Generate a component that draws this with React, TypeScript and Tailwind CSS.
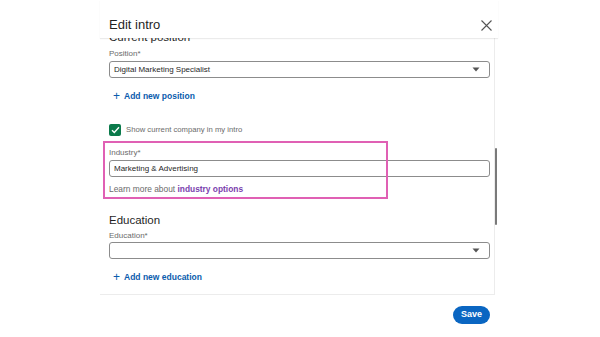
import React from 'react';

function Caret() {
  return (
    <svg width="8" height="5" viewBox="0 0 8 5" className="text-[#555]">
      <path d="M0.5 0.5h7L4 4.5z" fill="currentColor" />
    </svg>
  );
}

function SelectBox({ value }: { value?: string }) {
  return (
    <div className="h-[17px] border border-[#8c8c8c] rounded-[3px] flex items-center justify-between pl-[4px] pr-[9px]">
      <span className="text-[8px] text-[#1f1f1f]">{value ?? ''}</span>
      <Caret />
    </div>
  );
}

function Label({ children }: { children: React.ReactNode }) {
  return <div className="text-[8px] leading-[10px] text-[#6b6b6b]">{children}</div>;
}

function AddLink({ text }: { text: string }) {
  return (
    <div className="flex items-center gap-[4px] pl-[4px] text-[8.5px] leading-[12px] font-bold text-[#0a5cad]">
      <span className="text-[12px] font-normal leading-[12px]">+</span>
      {text}
    </div>
  );
}

export default function App() {
  return (
    <div className="w-[600px] h-[337px] bg-white font-['Liberation_Sans',Arial,sans-serif] relative overflow-hidden">
      <div className="ml-[100px] w-[398px] flex flex-col">
        <div className="h-[38px] flex items-center justify-between pl-[9px] pr-[6px] pt-[12px] bg-white relative z-10 shadow-[0_1px_1px_rgba(0,0,0,0.08)]">
          <span className="text-[13px] text-[#1f1f1f]">Edit intro</span>
          <svg width="11" height="11" viewBox="0 0 11 11" className="text-[#555]">
            <path d="M0.5 0.5l10 10M10.5 0.5l-10 10" stroke="currentColor" strokeWidth="1.1" />
          </svg>
        </div>

        <div className="flex h-[257px]">
          <div className="w-[395px] border-r border-[#ececec] border-b overflow-hidden pl-[9px] pr-[4px] flex flex-col">
            <div className="-mt-[8px] text-[11.5px] leading-[15px] text-[#1f1f1f]">Current position</div>
            <div className="mt-[4px]"><Label>Position*</Label></div>
            <div className="mt-[2px]"><SelectBox value="Digital Marketing Specialist" /></div>
            <div className="mt-[12px]"><AddLink text="Add new position" /></div>

            <div className="mt-[22px] flex items-center gap-[5px]">
              <div className="w-[12px] h-[12px] rounded-[2px] bg-[#0b7a4b] flex items-center justify-center">
                <svg width="9" height="8" viewBox="0 0 9 8">
                  <path d="M1 4.2l2.3 2.3L8 1.2" fill="none" stroke="white" strokeWidth="1.4" />
                </svg>
              </div>
              <span className="text-[7.7px] text-[#6b6b6b]">Show current company in my intro</span>
            </div>

            <div className="mt-[12px]"><Label>Industry*</Label></div>
            <div className="mt-[2px] h-[17px] border border-[#8c8c8c] rounded-[3px] flex items-center pl-[4px]">
              <span className="text-[8px] text-[#1f1f1f]">Marketing &amp; Advertising</span>
            </div>
            <div className="mt-[6px] text-[8.4px] leading-[12px] text-[#6b6b6b]">
              Learn more about <span className="font-bold text-[#7b3fae]">industry options</span>
            </div>

            <div className="mt-[18px] text-[11.5px] leading-[15px] text-[#1f1f1f]">Education</div>
            <div className="mt-[3px]"><Label>Education*</Label></div>
            <div className="mt-[1px]"><SelectBox /></div>
            <div className="mt-[12px]"><AddLink text="Add new education" /></div>
          </div>
          <div className="w-[3px]">
            <div className="mt-[110px] h-[77px] w-[2px] bg-[#7a7a7a] rounded-full" />
          </div>
        </div>

        <div className="flex justify-end pr-[8px] pt-[11px]">
          <div className="h-[18px] w-[37px] rounded-full bg-[#0a66c2] flex items-center justify-center text-[9px] font-bold text-white">
            Save
          </div>
        </div>
      </div>

      <div className="absolute left-[103px] top-[141px] w-[285px] h-[58px] border-2 border-[#e060b4]" />
    </div>
  );
}
